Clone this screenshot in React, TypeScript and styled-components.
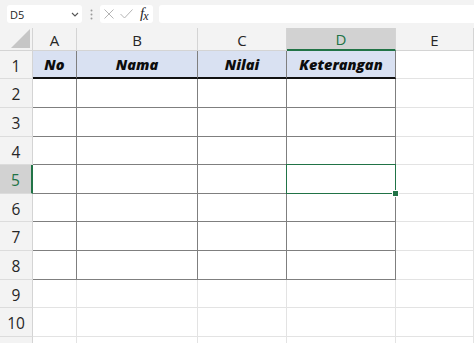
import styled, { createGlobalStyle } from "styled-components";

const GlobalStyle = createGlobalStyle`
  html, body {
    margin: 0;
    padding: 0;
    background: #ffffff;
    overflow: hidden;
  }
  body {
    font-family: "Open Sans", "Noto Sans", sans-serif;
  }
`;

const Window = styled.div`
  width: 474px;
  height: 343px;
  overflow: hidden;
  background: #ffffff;
  display: flex;
  flex-direction: column;
`;

const FormulaBar = styled.div`
  display: flex;
  align-items: center;
  height: 28px;
  padding: 0 0 0 7px;
  box-sizing: border-box;
  background: #f3f3f3;
  flex-shrink: 0;
`;

const NameBox = styled.div`
  width: 75px;
  height: 18px;
  box-sizing: border-box;
  background: #ffffff;
  border-radius: 3px;
  display: flex;
  align-items: center;
  justify-content: space-between;
  padding: 0 3px 0 3px;
  font-size: 11px;
  color: #262626;
`;

const Dots = styled.div`
  width: 18px;
  display: flex;
  justify-content: center;
`;

const ActionBox = styled.div`
  width: 53px;
  height: 18px;
  background: #ffffff;
  border-radius: 3px;
  display: flex;
  align-items: center;
  gap: 6px;
  padding: 0 0 0 4px;
  box-sizing: border-box;
`;

const Fx = styled.span`
  font-family: "Liberation Serif", "DejaVu Serif", serif;
  font-style: italic;
  font-size: 15px;
  line-height: 1;
  color: #262626;
  margin-left: 1px;
  sub {
    font-size: 12px;
    vertical-align: -2px;
    margin-left: -1px;
  }
`;

const FormulaInput = styled.div`
  flex: 1;
  height: 18px;
  margin-left: 6px;
  background: #ffffff;
  border-radius: 3px 0 0 3px;
`;

const Sheet = styled.div`
  display: grid;
  grid-template-columns: 33px 44px 121px 89px 109px 1fr;
  grid-template-rows: 23px 28px 29px 29px 28px 29px 28px 29px 29px 28px 29px 29px;
  flex: 1;
`;

const Corner = styled.div`
  background: #f3f3f3;
  border-right: 1px solid #d4d4d4;
  border-bottom: 1px solid #d4d4d4;
  box-sizing: border-box;
  display: flex;
  align-items: flex-end;
  justify-content: flex-end;
  padding: 0 2px 2px 0;
`;

const ColHead = styled.div<{ $active?: boolean }>`
  box-sizing: border-box;
  background: ${(p) => (p.$active ? "#d2d2d2" : "#f3f3f3")};
  color: ${(p) => (p.$active ? "#217346" : "#262626")};
  border-right: 1px solid #d4d4d4;
  border-bottom: ${(p) => (p.$active ? "2px solid #217346" : "1px solid #d4d4d4")};
  display: flex;
  align-items: center;
  justify-content: center;
  font-size: 15px;
  padding-top: 1px;
`;

const RowHead = styled.div<{ $active?: boolean }>`
  box-sizing: border-box;
  background: ${(p) => (p.$active ? "#d2d2d2" : "#f3f3f3")};
  color: ${(p) => (p.$active ? "#217346" : "#262626")};
  border-right: ${(p) => (p.$active ? "2px solid #217346" : "1px solid #d4d4d4")};
  border-bottom: 1px solid #dcdcdc;
  display: flex;
  align-items: center;
  justify-content: center;
  font-size: 15.5px;
  padding-top: 2px;
`;

type Kind = "title" | "body" | "plain";

const Cell = styled.div<{ $kind: Kind; $selected?: boolean }>`
  position: relative;
  box-sizing: border-box;
  background: ${(p) => (p.$kind === "title" ? "#d9e1f2" : "#ffffff")};
  border-right: 1px solid
    ${(p) => (p.$kind === "plain" ? "#e3e3e3" : "#7f7f7f")};
  border-bottom: ${(p) =>
    p.$kind === "title"
      ? "2px solid #111111"
      : p.$kind === "body"
        ? "1px solid #7f7f7f"
        : "1px solid #e3e3e3"};
  display: flex;
  align-items: center;
  justify-content: center;
  font-size: 14.5px;
  font-weight: 800;
  font-style: italic;
  color: #0d0d0d;
  padding-top: 1px;

  ${(p) =>
    p.$selected &&
    `
    &::before {
      content: "";
      position: absolute;
      left: -1px;
      top: -1px;
      right: -1px;
      bottom: -1px;
      border: 1.5px solid #217346;
      z-index: 1;
    }
    &::after {
      content: "";
      position: absolute;
      right: -4px;
      bottom: -4px;
      width: 5px;
      height: 5px;
      background: #217346;
      border: 1px solid #ffffff;
      z-index: 2;
    }
  `}
`;

const columns = ["A", "B", "C", "D", "E"];
const titles = ["No", "Nama", "Nilai", "Keterangan"];
const rows = [1, 2, 3, 4, 5, 6, 7, 8, 9, 10, 11];
const lastNumbered = 10;
const activeCol = 3;
const activeRow = 5;

function kindOf(row: number, col: number): Kind {
  if (col > 3 || row > 8) return "plain";
  return row === 1 ? "title" : "body";
}

function App() {
  return (
    <>
      <GlobalStyle />
      <Window>
        <FormulaBar>
          <NameBox>
            <span>D5</span>
            <svg width="8" height="5" viewBox="0 0 8 5">
              <path d="M1 1 L4 4 L7 1" fill="none" stroke="#555" strokeWidth="1.1" />
            </svg>
          </NameBox>
          <Dots>
            <svg width="3" height="11" viewBox="0 0 3 11">
              <circle cx="1.5" cy="1.5" r="1" fill="#9a9a9a" />
              <circle cx="1.5" cy="5.5" r="1" fill="#9a9a9a" />
              <circle cx="1.5" cy="9.5" r="1" fill="#9a9a9a" />
            </svg>
          </Dots>
          <ActionBox>
            <svg width="10" height="10" viewBox="0 0 10 10">
              <path d="M0.5 0.5 L9.5 9.5 M9.5 0.5 L0.5 9.5" stroke="#b4b4b4" strokeWidth="1" />
            </svg>
            <svg width="13" height="10" viewBox="0 0 13 10">
              <path d="M0.5 5 L4.5 9 L12.5 0.5" fill="none" stroke="#b4b4b4" strokeWidth="1" />
            </svg>
            <Fx>
              f<sub>x</sub>
            </Fx>
          </ActionBox>
          <FormulaInput />
        </FormulaBar>
        <Sheet>
          <Corner>
            <svg width="19" height="19" viewBox="0 0 19 19">
              <path d="M19 0 L19 19 L0 19 Z" fill="#c6c6c6" />
            </svg>
          </Corner>
          {columns.map((c, i) => (
            <ColHead key={c} $active={i === activeCol}>
              {c}
            </ColHead>
          ))}
          {rows.map((r) => (
            <>
              <RowHead key={`h${r}`} $active={r === activeRow}>
                {r <= lastNumbered ? r : null}
              </RowHead>
              {columns.map((c, i) => (
                <Cell
                  key={`${c}${r}`}
                  $kind={kindOf(r, i)}
                  $selected={r === activeRow && i === activeCol}
                >
                  {r === 1 && i < 4 ? titles[i] : null}
                </Cell>
              ))}
            </>
          ))}
        </Sheet>
      </Window>
    </>
  );
}

export default App;
